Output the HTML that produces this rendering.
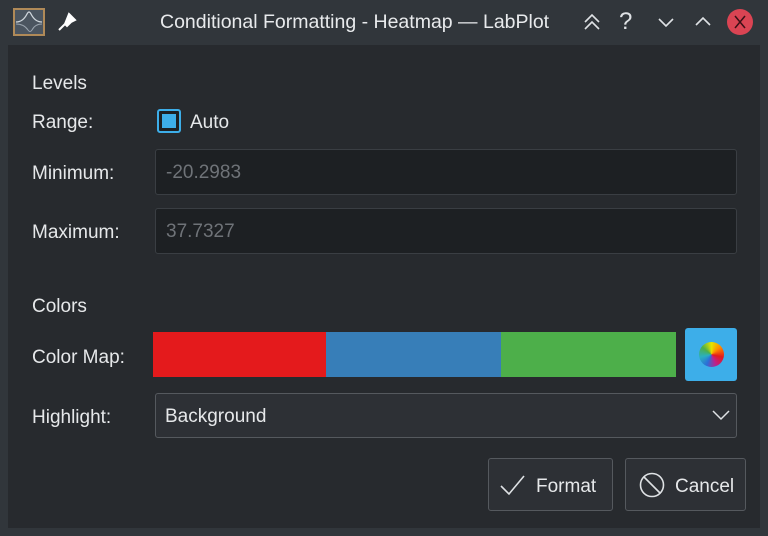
<!DOCTYPE html>
<html><head><style>
*{margin:0;padding:0;box-sizing:border-box}
body{width:768px;height:536px;background:#31363b;font-family:"Liberation Sans",sans-serif;color:#e6e8ea;position:relative;overflow:hidden;font-size:19px}
.a{position:absolute;white-space:nowrap}
.panel{position:absolute;left:8px;top:45px;width:752px;height:483px;background:#272a2e}
.inp{position:absolute;background:#1d2023;border:1px solid #3a3e43;border-radius:3px;color:#6f7378;padding-left:10px;line-height:46px}
.btn{position:absolute;border:1px solid #55595e;border-radius:3px;background:#2d3035}
</style></head><body>
<div class="a" style="left:13px;top:8px;width:32px;height:28px;border:2px solid #b08a58;background:#4b5560"></div>
<svg class="a" style="left:15px;top:10px" width="28" height="24"><path d="M1 12 Q8 12 12 4 Q14 0 16 4 Q20 12 27 12" stroke="#cfd6dc" fill="none" stroke-width="1.3"/><path d="M1 14 Q9 14 13 20 Q15 23 17 20 Q20 14 27 14" stroke="#9aa4ae" fill="none"/></svg>
<svg class="a" style="left:57px;top:12px" width="20" height="20"><path d="M12 2 L18 8 L14 10 L10 14 L8 12 Z M8 12 L2 18" stroke="#fff" fill="#fff" stroke-width="2"/></svg>
<div class="a" style="left:160px;top:11px;font-size:19.5px;color:#e8eaec">Conditional Formatting - Heatmap — LabPlot</div>
<svg class="a" style="left:580px;top:10px" width="24" height="24"><path d="M5 12 L12 5 L19 12 M5 19 L12 12 L19 19" stroke="#dfe2e5" fill="none" stroke-width="1.6"/></svg>
<div class="a" style="left:619px;top:8px;font-size:24px;color:#dfe2e5">?</div>
<svg class="a" style="left:654px;top:10px" width="24" height="24"><path d="M5 9 L12 16 L19 9" stroke="#dfe2e5" fill="none" stroke-width="1.6"/></svg>
<svg class="a" style="left:691px;top:10px" width="24" height="24"><path d="M5 15 L12 8 L19 15" stroke="#dfe2e5" fill="none" stroke-width="1.6"/></svg>
<svg class="a" style="left:726px;top:8px" width="28" height="28"><circle cx="14" cy="14" r="13" fill="#da4453"/><path d="M9 8 L19 20 M19 8 L9 20" stroke="#3b1016" stroke-width="1.5"/></svg>
<div class="panel"></div>
<div class="a" style="left:32px;top:73px">Levels</div>
<div class="a" style="left:32px;top:112px">Range:</div>
<div class="a" style="left:157px;top:109px;width:24px;height:24px;border:2px solid #3daee9;border-radius:3px;background:#1d2023"><div style="margin:3px;width:14px;height:14px;background:#3daee9"></div></div>
<div class="a" style="left:190px;top:112px">Auto</div>
<div class="a" style="left:32px;top:163px">Minimum:</div>
<div class="inp" style="left:155px;top:149px;width:582px;height:46px">-20.2983</div>
<div class="a" style="left:32px;top:222px">Maximum:</div>
<div class="inp" style="left:155px;top:208px;width:582px;height:46px">37.7327</div>
<div class="a" style="left:32px;top:296px">Colors</div>
<div class="a" style="left:32px;top:347px">Color Map:</div>
<div class="a" style="left:153px;top:332px;width:173px;height:45px;background:#e41a1c"></div>
<div class="a" style="left:326px;top:332px;width:175px;height:45px;background:#377eb8"></div>
<div class="a" style="left:501px;top:332px;width:175px;height:45px;background:#4daf4a"></div>
<div class="a" style="left:685px;top:328px;width:52px;height:53px;background:#3daee9;border-radius:3px"></div>
<div class="a" style="left:699px;top:342px;width:25px;height:25px;border-radius:50%;background:conic-gradient(#e5e500,#ff8800,#e41a1c,#c0208a,#2a6fd8,#2ab0c0,#4daf4a,#e5e500)"></div>
<div class="a" style="left:32px;top:407px">Highlight:</div>
<div class="a" style="left:155px;top:393px;width:582px;height:45px;background:#2d3035;border:1px solid #55595e;border-radius:3px;padding-left:9px;line-height:45px">Background</div>
<svg class="a" style="left:710px;top:405px" width="22" height="20"><path d="M3 6 L11 14 L19 6" stroke="#dfe2e5" fill="none" stroke-width="1.5"/></svg>
<div class="btn" style="left:488px;top:458px;width:125px;height:53px"></div>
<svg class="a" style="left:499px;top:472px" width="28" height="26"><path d="M2 14 L10 22 L25 4" stroke="#dfe2e5" fill="none" stroke-width="1.6"/></svg>
<div class="a" style="left:536px;top:476px">Format</div>
<div class="btn" style="left:625px;top:458px;width:121px;height:53px"></div>
<svg class="a" style="left:638px;top:471px" width="28" height="28"><circle cx="14" cy="14" r="11.5" stroke="#dfe2e5" fill="none" stroke-width="1.6"/><path d="M6 6 L22 22" stroke="#dfe2e5" stroke-width="1.6"/></svg>
<div class="a" style="left:675px;top:476px">Cancel</div>
</body></html>
